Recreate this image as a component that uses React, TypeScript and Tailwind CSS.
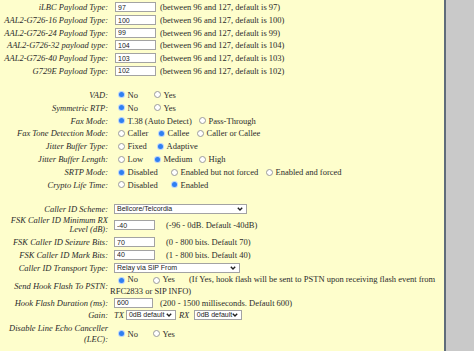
import React from "react";

type Option = { label: string; checked?: boolean; w?: string };

const payloadRows = [
  { label: "iLBC Payload Type:", value: "97" },
  { label: "AAL2-G726-16 Payload Type:", value: "100" },
  { label: "AAL2-G726-24 Payload Type:", value: "99" },
  { label: "AAL2-G726-32 payload type:", value: "104" },
  { label: "AAL2-G726-40 Payload Type:", value: "103" },
  { label: "G729E Payload Type:", value: "102" },
];

const radioRows: { label: string; options: Option[] }[] = [
  {
    label: "VAD:",
    options: [{ label: "No", checked: true, w: "w-[36px]" }, { label: "Yes" }],
  },
  {
    label: "Symmetric RTP:",
    options: [{ label: "No", checked: true, w: "w-[36px]" }, { label: "Yes" }],
  },
  {
    label: "Fax Mode:",
    options: [
      { label: "T.38 (Auto Detect)", checked: true, w: "w-[81px]" },
      { label: "Pass-Through" },
    ],
  },
  {
    label: "Fax Tone Detection Mode:",
    options: [
      { label: "Caller", w: "w-[40px]" },
      { label: "Callee", checked: true, w: "w-[39px]" },
      { label: "Caller or Callee" },
    ],
  },
  {
    label: "Jitter Buffer Type:",
    options: [{ label: "Fixed", w: "w-[39px]" }, { label: "Adaptive", checked: true }],
  },
  {
    label: "Jitter Buffer Length:",
    options: [
      { label: "Low", w: "w-[36px]" },
      { label: "Medium", checked: true, w: "w-[45px]" },
      { label: "High" },
    ],
  },
  {
    label: "SRTP Mode:",
    options: [
      { label: "Disabled", checked: true, w: "w-[53px]" },
      { label: "Enabled but not forced", w: "w-[95px]" },
      { label: "Enabled and forced" },
    ],
  },
  {
    label: "Crypto Life Time:",
    options: [{ label: "Disabled", w: "w-[53px]" }, { label: "Enabled", checked: true }],
  },
];

function Radio({ checked }: { checked?: boolean }) {
  if (checked) {
    return (
      <span className="inline-flex items-center justify-center w-[7px] h-[7px] shrink-0 rounded-full bg-[#b9d3fb]">
        <span className="w-[5px] h-[5px] rounded-full bg-[#2f7ff2]" />
      </span>
    );
  }
  return <span className="inline-block w-[7px] h-[7px] shrink-0 rounded-full border border-[#9b9b9b] bg-white" />;
}

function RadioOption({ label, checked, w = "" }: Option) {
  return (
    <span className={`inline-flex items-center gap-[2.5px] align-middle whitespace-nowrap ${w}`}>
      <Radio checked={checked} />
      <span>{label}</span>
    </span>
  );
}

function TextBox({ value, w = "w-[41px]", ml = "ml-[4px]" }: { value: string; w?: string; ml?: string }) {
  return (
    <input
      type="text"
      readOnly
      defaultValue={value}
      className={`${w} ${ml} h-[10px] border border-[#a3a3a3] bg-white px-[2px] text-[7px] leading-[8px] text-[#222] font-['Liberation_Sans',Arial,sans-serif] outline-none`}
    />
  );
}

function Chevron() {
  return (
    <svg width="6" height="4" viewBox="0 0 6 4" className="shrink-0">
      <path d="M0.8 0.8 L3 3 L5.2 0.8" fill="none" stroke="#1f1f1f" strokeWidth="1.4" />
    </svg>
  );
}

function Select({ value, w }: { value: string; w: string }) {
  return (
    <span
      className={`inline-flex items-center justify-between h-[10px] ${w} border border-[#a3a3a3] bg-white pl-[2px] pr-[3px] text-[7px] leading-[8px] whitespace-nowrap overflow-hidden text-[#222] font-['Liberation_Sans',Arial,sans-serif]`}
    >
      <span>{value}</span>
      <Chevron />
    </span>
  );
}

function Row({ label, h, children }: { label: React.ReactNode; h: string; children?: React.ReactNode }) {
  return (
    <div className={`grid grid-cols-[110px_1fr] items-center ${h}`}>
      <div className="pr-[2px] text-right italic">{label}</div>
      <div className="flex items-center whitespace-nowrap">{children}</div>
    </div>
  );
}

export default function App() {
  return (
    <div className="flex h-[351px] w-[474px] overflow-hidden font-['Liberation_Serif','Times_New_Roman',serif] text-[8.5px] leading-[10px] text-[#2b2b2b]">
      <main className="w-[446px] shrink-0 bg-[#fefecc] border-r-2 border-[#5f6c7a] pt-[1px]">
        {payloadRows.map((r) => (
          <Row key={r.label} label={r.label} h="h-[12.7px]">
            <TextBox value={r.value} ml="ml-[5px]" />
            <span className="ml-[4px]">(between 96 and 127, default is {r.value})</span>
          </Row>
        ))}

        <div className="h-[11.4px]" />

        {radioRows.map((r) => (
          <Row key={r.label} label={r.label} h="h-[12.85px]">
            <span className="ml-[8px] flex items-center">
              {r.options.map((o) => (
                <RadioOption key={o.label} {...o} />
              ))}
            </span>
          </Row>
        ))}

        <div className="h-[11px]" />

        <Row label="Caller ID Scheme:" h="h-[12.8px]">
          <span className="ml-[4px] flex">
            <Select value="Bellcore/Telcordia" w="w-[133px]" />
          </span>
        </Row>
        <Row
          label={
            <span className="block leading-[9px]">
              FSK Caller ID Minimum RX
              <br />
              Level (dB):
            </span>
          }
          h="h-[20.6px]"
        >
          <TextBox value="-40" />
          <span className="ml-[11px]">(-96 - 0dB. Default -40dB)</span>
        </Row>
        <Row label="FSK Caller ID Seizure Bits:" h="h-[12.8px]">
          <TextBox value="70" />
          <span className="ml-[11px]">(0 - 800 bits. Default 70)</span>
        </Row>
        <Row label="FSK Caller ID Mark Bits:" h="h-[12.8px]">
          <TextBox value="40" />
          <span className="ml-[11px]">(1 - 800 bits. Default 40)</span>
        </Row>
        <Row label="Caller ID Transport Type:" h="h-[12.8px]">
          <span className="ml-[4px] flex">
            <Select value="Relay via SIP From" w="w-[126px]" />
          </span>
        </Row>

        <div className="grid grid-cols-[110px_1fr] items-center h-[22.5px]">
          <div className="pr-[2px] text-right italic">Send Hook Flash To PSTN:</div>
          <div className="leading-[11.5px]">
            <span className="ml-[8px]" />
            <RadioOption label="No" checked w="w-[35px]" />
            <RadioOption label="Yes" w="w-[36px]" />
            <span>(If Yes, hook flash will be sent to PSTN upon receiving flash event from</span>
            <br />
            <span>RFC2833 or SIP INFO)</span>
          </div>
        </div>

        <Row label="Hook Flash Duration (ms):" h="h-[12.2px]">
          <TextBox value="600" w="w-[39px]" />
          <span className="ml-[7px]">(200 - 1500 milliseconds. Default 600)</span>
        </Row>
        <Row label="Gain:" h="h-[12px]">
          <span className="ml-[4px] italic">TX</span>
          <span className="ml-[2px] flex">
            <Select value="0dB default" w="w-[50px]" />
          </span>
          <span className="ml-[3px] italic">RX</span>
          <span className="ml-[4.5px] flex">
            <Select value="0dB default" w="w-[48px]" />
          </span>
        </Row>
        <Row
          label={
            <span className="block leading-[11px]">
              Disable Line Echo Canceller
              <br />
              (LEC):
            </span>
          }
          h="h-[26px]"
        >
          <span className="ml-[8px] flex items-center">
            <RadioOption label="No" checked w="w-[35px]" />
            <RadioOption label="Yes" />
          </span>
        </Row>
      </main>
      <aside className="flex-1 bg-[#c9c9c9]" />
    </div>
  );
}
